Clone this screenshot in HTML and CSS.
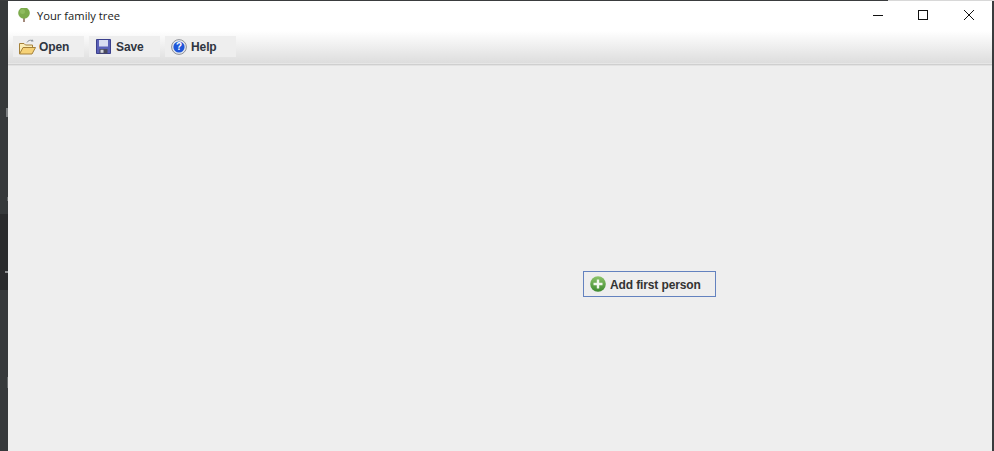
FILE: index.html
```html
<!DOCTYPE html>
<html lang="en">
<head>
<meta charset="utf-8">
<title>Your family tree</title>
<link rel="stylesheet" href="styles.css">
</head>
<body>
<div class="desk-top"><div class="desk-top-dark"></div></div>
<div class="screen">
  <div class="desk-left">
    <div class="seg seg-a"><span class="mark mark-1"></span><span class="mark mark-2"></span></div>
    <div class="seg seg-b"><span class="mark mark-3"></span></div>
    <div class="seg seg-c"><span class="mark mark-4"></span></div>
  </div>
  <main class="window">
    <header class="titlebar">
      <svg class="app-icon" width="12" height="14" viewBox="0 0 12 14">
        <rect x="5" y="8" width="2" height="6" fill="#a48a7c"/>
        <circle cx="6" cy="5" r="5.800" fill="#7cab4c"/>
        <circle cx="4.500" cy="3.500" r="2.500" fill="#8fbc5f"/>
      </svg>
      <span class="title">Your family tree</span>
      <div class="win-controls">
        <button class="win-btn" aria-label="Minimize"><svg width="12" height="12" viewBox="0 0 12 12"><path d="M1 6.500h10" stroke="#111" stroke-width="1"/></svg></button>
        <button class="win-btn" aria-label="Maximize"><svg width="12" height="12" viewBox="0 0 12 12"><rect x="1.500" y="1.500" width="9" height="9" fill="none" stroke="#111"/></svg></button>
        <button class="win-btn win-close" aria-label="Close"><svg width="12" height="12" viewBox="0 0 12 12"><path d="M1 1l10 10M11 1L1 11" stroke="#111" stroke-width="1"/></svg></button>
      </div>
    </header>
    <nav class="toolbar">
      <button class="tool tool-open">
        <svg width="17" height="16" viewBox="0 0 17 16">
          <path d="M8 3.500C9 1.500 11 .8 13 1.500" fill="none" stroke="#8a9298" stroke-width="1"/>
          <path d="M13 .2l1.800 2-2.600.6z" fill="#8a9298"/>
          <path d="M.5 15V4.500h4.500l1.500 1.500h7v3" fill="#fbeeb8" stroke="#a5813a"/>
          <path d="M.5 15l3.500-6.500h12.500L13 15z" fill="#f6d277" stroke="#a5813a"/>
        </svg>
        <span>Open</span>
      </button>
      <button class="tool tool-save">
        <svg width="15" height="15" viewBox="0 0 15 15">
          <path d="M.5.500h14v14H.5z" fill="#5a60b8" stroke="#3a3f8c"/>
          <rect x="3" y="1" width="9" height="6.500" fill="#d9dcf2"/>
          <rect x="3.500" y="10" width="8" height="4.500" fill="#4a4a5c"/>
          <rect x="4.500" y="10.800" width="3" height="3" fill="#d4d6de"/>
        </svg>
        <span>Save</span>
      </button>
      <button class="tool tool-help">
        <svg width="16" height="16" viewBox="0 0 16 16">
          <circle cx="8" cy="8" r="7.400" fill="#e6e9ee" stroke="#8d8f96" stroke-width="1"/>
          <circle cx="8" cy="8" r="5.600" fill="#1f56d8"/>
          <text x="8" y="11.400" class="help-mark" text-anchor="middle">?</text>
        </svg>
        <span>Help</span>
      </button>
    </nav>
    <section class="canvas">
      <button class="add-person">
        <svg width="16" height="16" viewBox="0 0 16 16">
          <defs><linearGradient id="g" x1="0" y1="0" x2="0" y2="1"><stop offset="0" stop-color="#8cc46a"/><stop offset="1" stop-color="#3d8a2e"/></linearGradient></defs>
          <circle cx="8" cy="8" r="7.800" fill="url(#g)"/>
          <path d="M8 3.500v9M3.500 8h9" stroke="#f2f7ee" stroke-width="2.400"/>
        </svg>
        <span class="add-label">Add first person</span>
      </button>
    </section>
  </main>
  <div class="desk-right"></div>
</div>
</body>
</html>
```
FILE: styles.css
```css
* { box-sizing: border-box; }
html, body { margin: 0; padding: 0; }
body {
  width: 994px;
  height: 451px;
  overflow: hidden;
  font-family: "Liberation Sans", Arial, sans-serif;
  display: flex;
  flex-direction: column;
  background: #36393b;
}
button { font: inherit; border: 0; padding: 0; background: none; }

.desk-top { height: 1px; flex: none; background: #d8d8d8; }
.desk-top-dark { width: 888px; height: 1px; background: #3a3c3e; }

.screen { flex: 1; display: flex; min-height: 0; }

.desk-left { width: 8px; flex: none; display: flex; flex-direction: column; }
.seg { position: relative; }
.seg-a { height: 213px; background: #36393b; }
.seg-b { height: 76px; background: #2a2b2d; }
.seg-c { flex: 1; background: #36393b; }
.mark { position: absolute; display: block; }
.mark-1 { left: 6px; top: 107px; width: 2px; height: 9px; background: #7d8082; }
.mark-2 { left: 7px; top: 196px; width: 1px; height: 4px; background: #66696b; }
.mark-3 { left: 5px; top: 57px; width: 3px; height: 2px; background: #8f9193; }
.mark-4 { left: 7px; top: 87px; width: 1px; height: 11px; background: #65686a; }

.window { flex: 1; display: flex; flex-direction: column; min-width: 0; background: #eeeeee; }
.desk-right { width: 2px; flex: none; background: #3a3c3e; }

.titlebar {
  height: 30px;
  flex: none;
  display: flex;
  align-items: center;
  padding: 0 0 0 10px;
  background: #ffffff;
}
.app-icon { flex: none; margin-top: -2px; }
.title {
  margin-left: 7px;
  margin-top: -2px;
  font-family: "Open Sans", "Noto Sans", sans-serif;
  font-size: 11.2px;
  color: #1a1a1a;
}
.win-controls { margin-left: auto; display: flex; margin-top: -2px; }
.win-btn {
  width: 45px;
  height: 29px;
  display: flex;
  align-items: center;
  justify-content: center;
}
.win-close { width: 47px; }

.toolbar {
  height: 34px;
  flex: none;
  display: flex;
  gap: 5px;
  padding: 5px 0 0 5px;
  background: linear-gradient(#ffffff, #dcdcdc);
  border-bottom: 1px solid #cfcfcf;
  box-shadow: inset 0 -1px 0 #e6e6e6;
}
.tool {
  width: 71px;
  height: 21px;
  display: flex;
  align-items: center;
  background: #eeeeee;
  font-size: 12px;
  letter-spacing: -0.1px;
  font-weight: bold;
  color: #2f3540;
}
.tool-open { padding-left: 6px; gap: 3px; }
.tool-save { padding-left: 7px; gap: 5px; }
.tool-help { padding-left: 6px; gap: 4px; }
.help-mark { font: bold 10px "Liberation Sans", sans-serif; fill: #ffffff; }

.canvas { flex: 1; position: relative; background: #eeeeee; border-top: 1px solid #e2e2e2; }
.add-person {
  position: absolute;
  left: 575px;
  top: 205px;
  width: 133px;
  height: 26px;
  display: flex;
  align-items: center;
  gap: 4px;
  padding-left: 6px;
  background: #eeeeee;
  border: 1px solid #6382bf;
  font-size: 12px;
  letter-spacing: -0.12px;
  font-weight: bold;
  color: #333333;
}
.add-label { margin-top: 1px; }
```
